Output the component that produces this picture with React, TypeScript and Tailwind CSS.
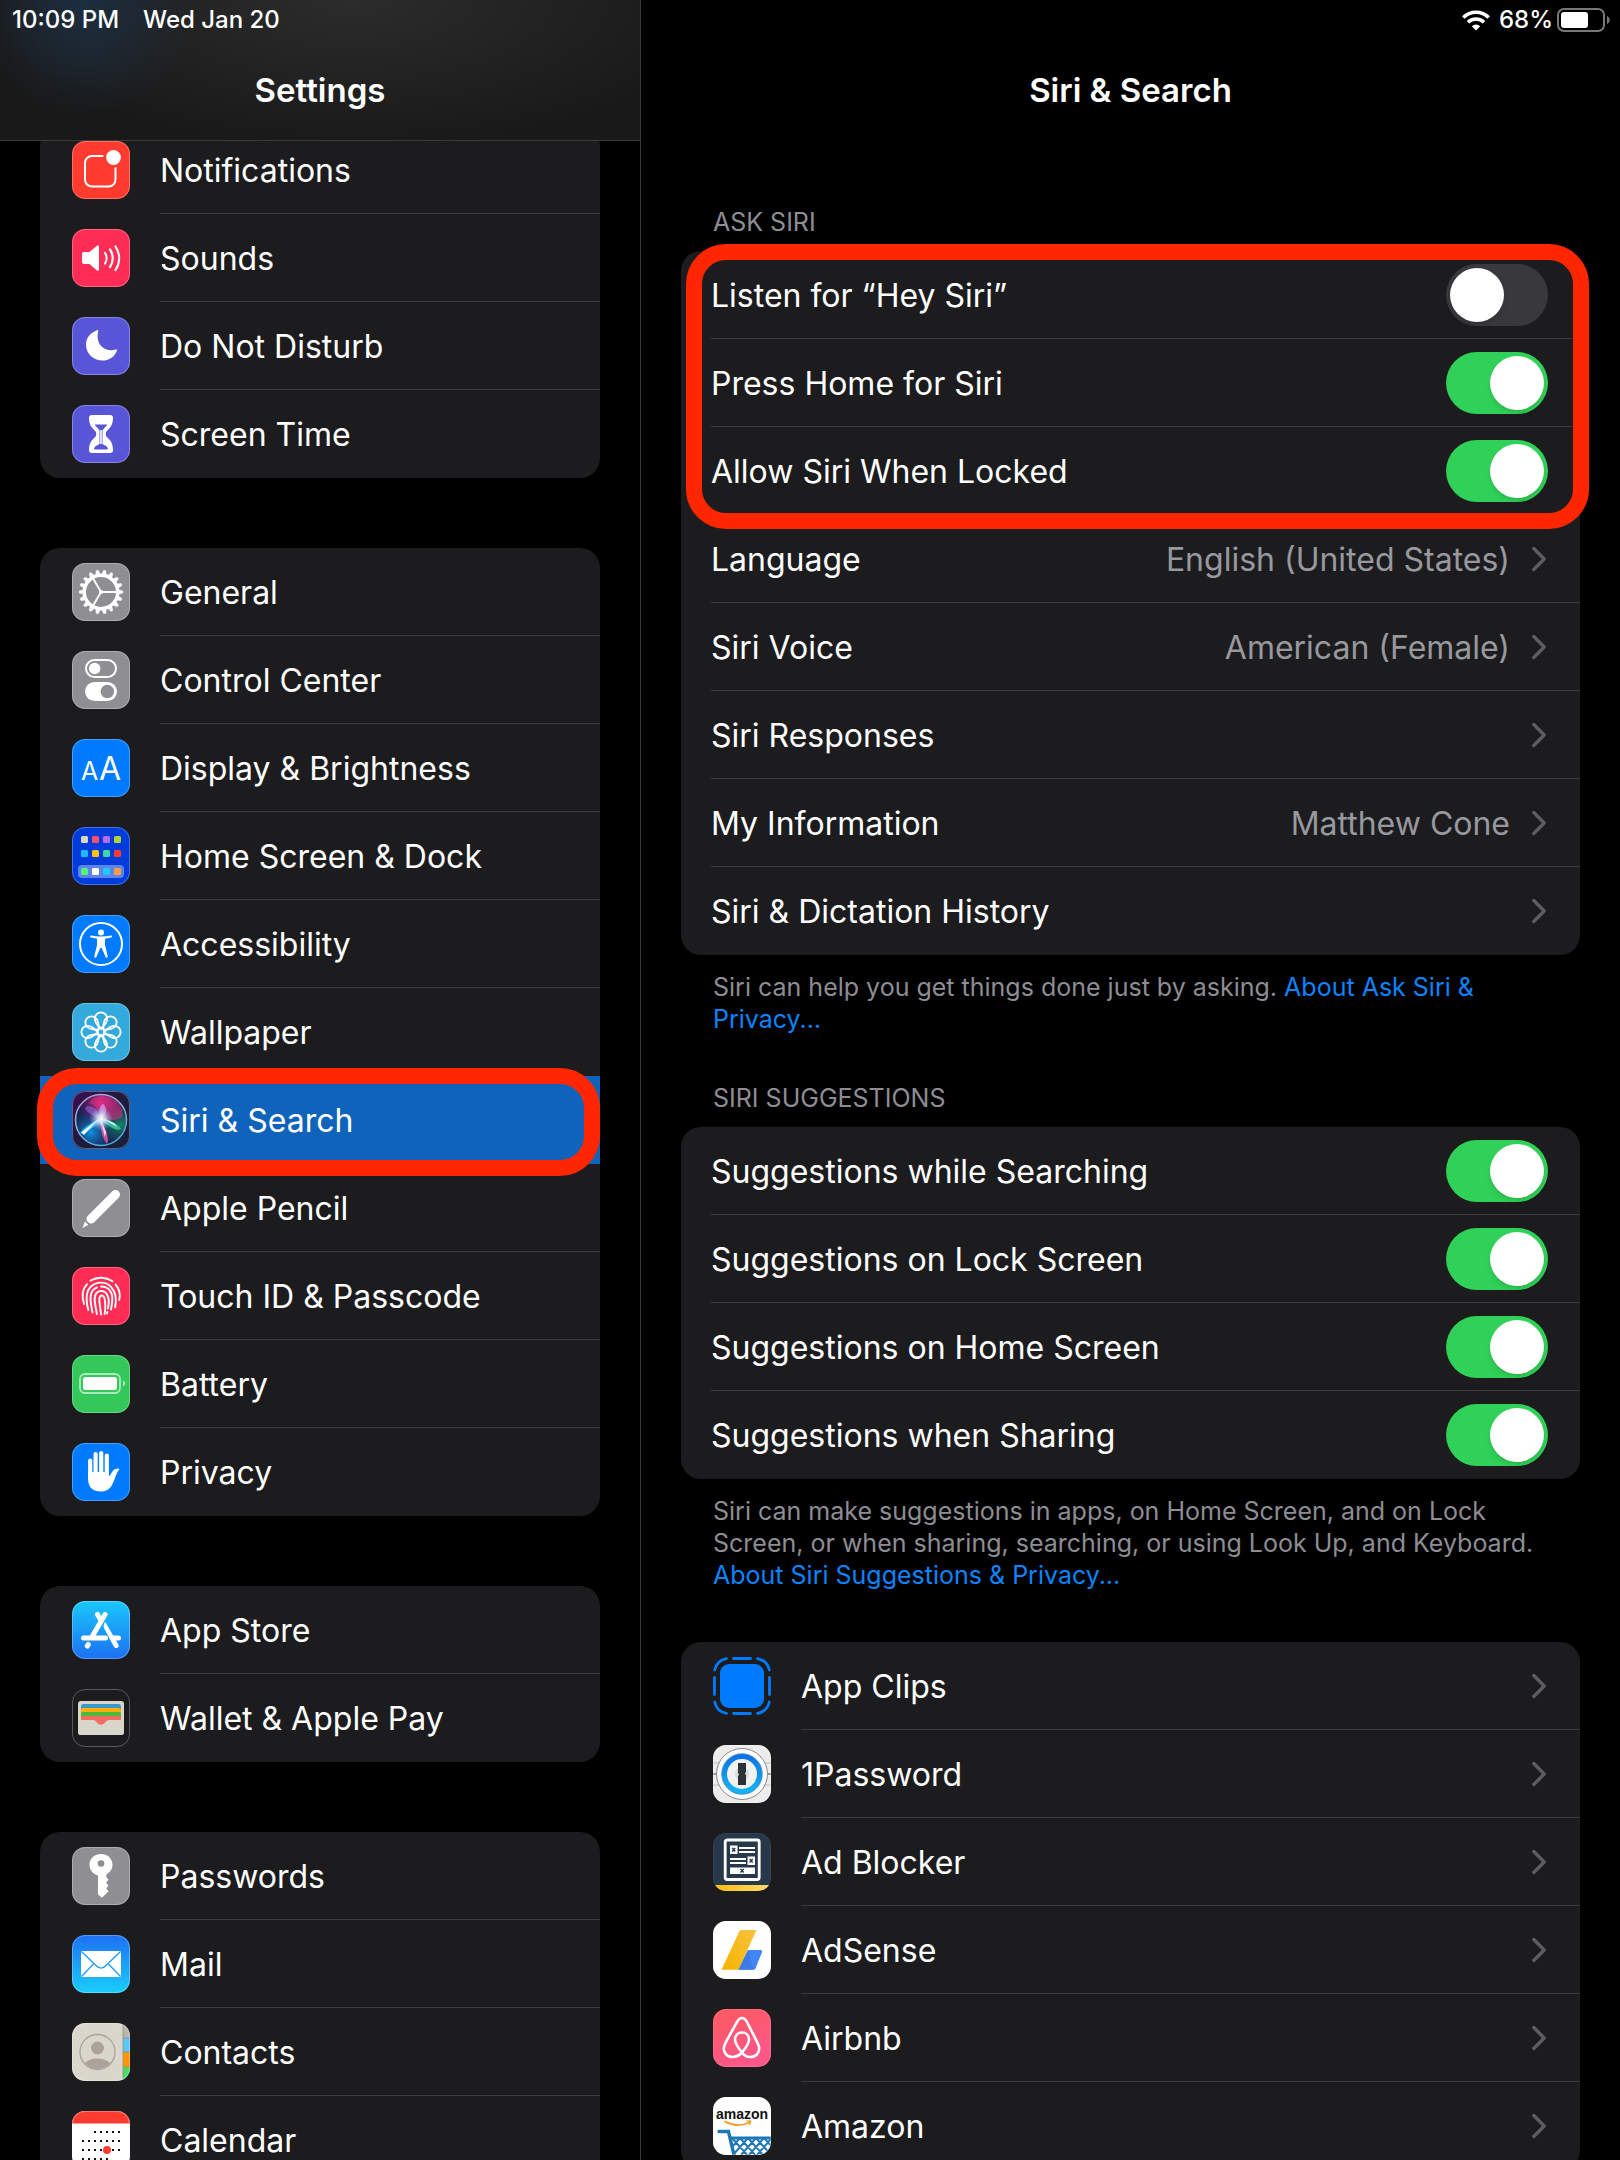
import React, { useState } from 'react';

const GEAR_TEETH = Array.from({ length: 18 }, (_, i) => i * 20);
const PETALS = Array.from({ length: 8 }, (_, i) => i * 45);

// Rounded app tile, every glyph is drawn on a 58 x 58 grid
const Tile = ({ id, fill, edge = 'rgba(255,255,255,0.28)', children }) => (
  <svg viewBox="0 0 58 58" className="size-[58px] shrink-0" aria-hidden="true">
    <defs>
      <clipPath id={`tile-${id}`}>
        <rect width="58" height="58" rx="13" />
      </clipPath>
    </defs>
    <g clipPath={`url(#tile-${id})`}>
      <rect width="58" height="58" fill={fill} />
      {children}
    </g>
    <rect x="0.5" y="0.5" width="57" height="57" rx="12.5" fill="none" stroke={edge} />
  </svg>
);

const NotificationsIcon = () => (
  <Tile id="notifications" fill="#ff3b30">
    <rect x="13" y="15" width="30.5" height="30.5" rx="7" fill="none" stroke="#fff" strokeWidth="2" />
    <circle cx="41.5" cy="16.5" r="10.3" fill="#ff3b30" />
    <circle cx="41.5" cy="16.5" r="7.4" fill="#fff" />
  </Tile>
);

const SoundsIcon = () => (
  <Tile id="sounds" fill="#ff2d55">
    <path d="M12 23h5.500l7.500-6.200c1-.8 2-.3 2 1v22.600c0 1.300-1 1.800-2 1L17.500 35H12c-1.300 0-2-.8-2-2v-8c0-1.200.7-2 2-2z" fill="#fff" />
    <g fill="none" stroke="#fff" strokeWidth="2.200" strokeLinecap="round">
      <path d="M33 24c2 3 2 7.500 0 10.500" />
      <path d="M38 20.500c3.600 5.200 3.600 12.300 0 17.500" />
      <path d="M43.500 17.500c4.800 7.300 4.800 16.200 0 23.500" />
    </g>
  </Tile>
);

const MoonIcon = () => (
  <Tile id="moon" fill="#5856d6">
    <path d="M25 13.300c.9-.5 1.500.1 1.200 1.100-1.300 5-.5 11 3.200 14.800 3.700 3.800 9.300 4.800 14.200 3.300 1.100-.3 1.700.3 1.200 1.400C42.500 39.800 37 43.500 30.500 43.500 21.300 43.500 14 36.700 14 27.500c0-6.300 4-11.500 11-14.200z" fill="#fff" />
  </Tile>
);

const HourglassIcon = () => (
  <Tile id="hourglass" fill="#5856d6">
    <path d="M20 10h18c2 0 3 1 3 2.800 0 7-2.500 9.700-6.200 13.200-1.400 1.400-1.400 4.600 0 6 3.700 3.500 6.200 6.200 6.200 13.200 0 1.800-1 2.800-3 2.800H20c-2 0-3-1-3-2.800 0-7 2.500-9.700 6.200-13.200 1.400-1.400 1.400-4.600 0-6-3.700-3.500-6.200-6.200-6.200-13.200C17 11 18 10 20 10z" fill="#fff" />
    <path d="M23.500 19.500h11c.6 0 .7.500.3 1-1.600 1.900-3.400 3-4.300 5v13.500c1.500 1.200 3.800 1.700 5 3.500.8 1.300.5 2-.8 2H23.300c-1.300 0-1.600-.7-.8-2 1.200-1.800 3.500-2.300 5-3.500V25.500c-.9-2-2.700-3.100-4.300-5-.4-.5-.3-1 .3-1z" fill="#5856d6" />
    <path d="M29 25v14" stroke="#fff" strokeWidth="1.600" />
  </Tile>
);

const GeneralIcon = () => (
  <Tile id="general" fill="#8e8e93">
    <circle cx="29" cy="29" r="16.700" fill="none" stroke="#fff" strokeWidth="3.400" />
    {GEAR_TEETH.map((angle) => (
      <path key={angle} d="M45.500 26.600l5.300 1.300v2.200l-5.300 1.300z" fill="#fff" stroke="#fff" strokeWidth="0.500" transform={`rotate(${angle} 29 29)`} />
    ))}
    <g stroke="#fff" strokeWidth="2">
      <path d="M29 29h16" />
      <path d="M29 29l-8-13.800" />
      <path d="M29 29l-8 13.800" />
    </g>
    <circle cx="29" cy="29" r="2" fill="#fff" />
  </Tile>
);

const ControlCenterIcon = () => (
  <Tile id="control" fill="#8e8e93">
    <rect x="14" y="9" width="30" height="17" rx="8.500" fill="none" stroke="#fff" strokeWidth="2" />
    <circle cx="22.700" cy="17.500" r="5.700" fill="#fff" />
    <rect x="13" y="31" width="32" height="19" rx="9.500" fill="#fff" />
    <circle cx="35.300" cy="40.500" r="6.700" fill="#8e8e93" />
  </Tile>
);

const DisplayIcon = () => (
  <Tile id="display" fill="#007aff">
    <g fill="#fff" className="font-[Inter,sans-serif] font-normal">
      <text x="9" y="41" fontSize="25">A</text>
      <text x="27" y="41" fontSize="32">A</text>
    </g>
  </Tile>
);

const HOME_DOTS = [
  ['#d9d6cc', '#ff4f6a', '#b46cf7', '#b3d335'],
  ['#1cb8f7', '#ffc107', '#3dd6a5', '#ff3b30'],
  ['#55f07a', '#ffffff', '#1acbfd', '#ff9d45'],
];

const HomeScreenIcon = () => (
  <Tile id="home" fill="#003cdc">
    <rect x="6" y="38" width="46" height="13" rx="4" fill="#5d84ea" />
    {HOME_DOTS.map((row, r) =>
      row.map((color, c) => (
        <rect key={color} x={9 + c * 11} y={[9, 23, 41][r]} width="7" height="7" rx="1.500" fill={color} />
      ))
    )}
  </Tile>
);

const AccessibilityIcon = () => (
  <Tile id="access" fill="#007aff">
    <circle cx="29" cy="29" r="21" fill="none" stroke="#fff" strokeWidth="2" />
    <circle cx="29" cy="17.500" r="3" fill="#fff" />
    <path d="M19 20.500c6.500 1.300 13.500 1.300 20 0 1.300-.2 1.500 1.500.3 1.900l-6.300 1.300v6.300l2.700 11.300c.3 1.500-1.600 2-2.100.6L29.700 33h-1.400l-3.900 8.900c-.5 1.400-2.400.9-2.100-.6L25 30v-6.300l-6.300-1.300c-1.200-.4-1-2.100.3-1.900z" fill="#fff" />
  </Tile>
);

const WallpaperIcon = () => (
  <Tile id="wallpaper" fill="#34aadc">
    <g fill="none" stroke="#fff" strokeWidth="1.800">
      {PETALS.map((angle) => (
        <path key={angle} d="M29 25.500C24.500 21.500 22.700 18 22.900 15.500A6.100 6.100 0 0 1 35.100 15.500C35.300 18 33.500 21.500 29 25.500" transform={`rotate(${angle} 29 29)`} />
      ))}
      <circle cx="29" cy="29" r="3.300" />
    </g>
  </Tile>
);

const SiriIcon = () => (
  <Tile id="siri" fill="url(#siri-bg)" edge="rgba(255,255,255,0.3)">
    <defs>
      <linearGradient id="siri-bg" x1="0" y1="0" x2="1" y2="1">
        <stop offset="0" stopColor="#3b0f52" />
        <stop offset="0.500" stopColor="#201a3d" />
        <stop offset="1" stopColor="#16213b" />
      </linearGradient>
      <linearGradient id="siri-ring" x1="0" y1="0" x2="0.600" y2="1">
        <stop offset="0" stopColor="#b59ad0" />
        <stop offset="0.500" stopColor="#8fb8d8" />
        <stop offset="1" stopColor="#4fa9dc" />
      </linearGradient>
      <radialGradient id="siri-pink" cx="0.500" cy="0.150" r="0.500">
        <stop offset="0" stopColor="#d92c8c" />
        <stop offset="1" stopColor="#7a1f86" stopOpacity="0" />
      </radialGradient>
      <radialGradient id="siri-blue" cx="0.300" cy="0.750" r="0.600">
        <stop offset="0" stopColor="#1290e4" />
        <stop offset="1" stopColor="#102a5c" stopOpacity="0" />
      </radialGradient>
      <radialGradient id="siri-green" cx="0.900" cy="0.600" r="0.400">
        <stop offset="0" stopColor="#17806a" />
        <stop offset="1" stopColor="#17806a" stopOpacity="0" />
      </radialGradient>
      <radialGradient id="siri-core">
        <stop offset="0" stopColor="#fff" />
        <stop offset="0.350" stopColor="#e7f4ff" stopOpacity="0.750" />
        <stop offset="1" stopColor="#6fb6ff" stopOpacity="0" />
      </radialGradient>
    </defs>
    <circle cx="29" cy="29" r="25" fill="#15193f" />
    <circle cx="29" cy="29" r="25" fill="url(#siri-blue)" />
    <circle cx="29" cy="29" r="25" fill="url(#siri-green)" />
    <circle cx="29" cy="29" r="25" fill="url(#siri-pink)" />
    <path d="M29 28C35 30 44 30 51 26C52 14 42 5 29 5C22 6 19 9 17 12C24 13 27 20 29 28Z" fill="#e8327f" opacity="0.500" />
    <path d="M29 28C22 26 14 21 13 17C17 13 26 16 29 28Z" fill="#9b6bd8" opacity="0.550" />
    <path d="M29 28C26 20 28 14 31 13C35 16 36 23 29 28Z" fill="#d7a7ee" opacity="0.700" />
    <path d="M29 28C20 30 9 38 8 43C17 40 26 35 29 28Z" fill="#29c8f2" opacity="0.750" />
    <path d="M29 26L9 41.500L12 44Z" fill="#e9fbff" />
    <path d="M28 27C37 29 47 33 49 38C44 41 34 34 28 27Z" fill="#35d39a" opacity="0.800" />
    <path d="M28 26L42 32L45 36Z" fill="#e9fff8" />
    <path d="M28 28C32 34 38 46 35 53C30 47 28 36 28 28Z" fill="#f2559f" opacity="0.850" />
    <path d="M28 27L34 41L33 46Z" fill="#ffe3f3" />
    <circle cx="29" cy="28" r="12" fill="url(#siri-core)" />
    <circle cx="29" cy="29" r="25.500" fill="none" stroke="url(#siri-ring)" strokeWidth="1.500" />
  </Tile>
);

const PencilIcon = () => (
  <Tile id="pencil" fill="#8e8e93">
    <path d="M19 40L43.500 15.500" stroke="#fff" strokeWidth="9" strokeLinecap="round" />
    <path d="M13 42.300l3.400 3.400-6.100 3.200z" fill="#fff" />
    <path d="M12.500 40.500L18.500 46.500" stroke="#8e8e93" strokeWidth="1.200" />
  </Tile>
);

const TouchIdIcon = () => (
  <Tile id="touch" fill="#ff2d55">
    <g fill="none" stroke="#fff" strokeWidth="1.900" strokeLinecap="round">
      <path d="M18.500 13.500a21 21 0 0 1 22 .8" />
      <path d="M12 37C9.500 29 11 21.500 15 17.200" />
      <path d="M43.500 17.500c3.800 4.200 5 10 3.800 15.500" />
      <path d="M16.300 43C14 34 13 25 19 19.500c6-5.500 15-5 20 .3 5.500 6 5.500 14 4.200 20.500" />
      <path d="M20.500 45.500C19 37 16.500 28 21.500 22.700c1-1 2.200-1.700 3.500-2.200" />
      <path d="M29 19.500c7.500 0 11.500 5.500 11.300 12.500 0 3.500-.5 7-1.300 10.500" />
      <path d="M24.800 47C23.700 38 20.500 30.500 24.500 26c3-3.300 8-2.500 10.300 1 3 4.800 2 11 1.200 14.500" />
      <path d="M29 47.500C28.500 39 26 32.500 28 29.500c1.300-1.800 3.700-1 4.300 1 1.300 5 1.200 11.500.3 16.500" />
      <path d="M35.300 45l-.3 1.500" />
    </g>
  </Tile>
);

const BatteryTileIcon = () => (
  <Tile id="battery" fill="#34c759">
    <rect x="8" y="19" width="40" height="19" rx="5" fill="none" stroke="#fff" strokeOpacity="0.600" strokeWidth="1.800" />
    <rect x="11" y="22" width="34" height="13" rx="2.500" fill="#fff" />
    <path d="M51 25.500c2.800 1.200 2.800 5 0 6z" fill="#fff" fillOpacity="0.600" />
  </Tile>
);

const HandIcon = () => (
  <Tile id="privacy" fill="#007aff">
    <g stroke="#fff" strokeWidth="4.200" strokeLinecap="round">
      <path d="M18.200 17.500V34" />
      <path d="M23.600 11V34" />
      <path d="M29.200 10V34" />
      <path d="M34.800 12.500V34" />
    </g>
    <path d="M16.100 29h20.800v4.500c2-1.500 3-6 6.300-7.500 1.700-.8 3.600-.8 4.300 0-3.200 3.800-4.200 9-6.300 13.500C38.500 46 34.500 48.500 28.800 48.500 21 48.500 16.100 44.500 16.100 36z" fill="#fff" />
  </Tile>
);

const AppStoreIcon = () => (
  <Tile id="appstore" fill="url(#appstore-bg)">
    <defs>
      <linearGradient id="appstore-bg" x1="0" y1="0" x2="0" y2="1">
        <stop offset="0" stopColor="#1ac8fc" />
        <stop offset="1" stopColor="#1d70f2" />
      </linearGradient>
    </defs>
    <g stroke="#fff" strokeWidth="5" strokeLinecap="round" fill="none">
      <path d="M33 13.500L20.500 35" />
      <path d="M25.500 13.500l3 5" />
      <path d="M16.300 43.500l-1 1.500" />
      <path d="M11.500 37h22" />
      <path d="M40 37h6.500" />
    </g>
    <path d="M33.300 21c-2.500 3-1.800 5.500-.3 8l8.800 16.500c2 3.200 6 1.200 4.600-2z" fill="#fff" />
  </Tile>
);

const WalletIcon = () => (
  <Tile id="wallet" fill="#1c1c1e" edge="#5a5a5d">
    <rect x="6" y="12" width="46" height="34" rx="3" fill="#d9d6cc" />
    <rect x="9" y="15" width="40" height="10" rx="2.500" fill="#3b99c9" />
    <rect x="9" y="19" width="40" height="10" rx="2" fill="#ffad0a" />
    <rect x="9" y="23" width="40" height="8" rx="1.500" fill="#4cbb3c" />
    <rect x="9" y="27" width="40" height="12" rx="1.500" fill="#f26d5f" />
    <path d="M6 31h14.500c2.500 0 3.500 1.300 4.500 2.600 2.200 2.800 5.800 2.800 8 0 1-1.300 2-2.600 4.500-2.600H52v12a3 3 0 0 1-3 3H9a3 3 0 0 1-3-3z" fill="#d9d6cc" />
  </Tile>
);

const KeyIcon = () => (
  <Tile id="key" fill="#8e8e93">
    <path d="M29 7c6.500 0 11.500 4.700 11.500 10.800 0 4.400-2.600 8-6.200 9.700v2.800l2.200 2.300-2.500 3.200 2.500 2.800-2.200 3 2.200 2.700-5.500 5.500c-.8.800-1.400.8-2.200 0L26 47.200V28.500c-5-1.200-8.500-5.500-8.500-10.700C17.500 11.700 22.500 7 29 7z" fill="#fff" />
    <circle cx="29" cy="16.500" r="3.300" fill="#8e8e93" />
  </Tile>
);

const MailIcon = () => (
  <Tile id="mail" fill="url(#mail-bg)">
    <defs>
      <linearGradient id="mail-bg" x1="0" y1="0" x2="0" y2="1">
        <stop offset="0" stopColor="#1d70f2" />
        <stop offset="1" stopColor="#1acefd" />
      </linearGradient>
    </defs>
    <rect x="9" y="16" width="40" height="26" rx="1" fill="#fff" />
    <g stroke="#1f9bf7" strokeWidth="1.300" fill="none">
      <path d="M9.500 16.500L24 30.500c3.300 3.500 6.700 3.500 10 0L48.500 16.500" />
      <path d="M9.500 41.500L21.500 29" />
      <path d="M48.500 41.500L36.500 29" />
    </g>
  </Tile>
);

const ContactsIcon = () => (
  <Tile id="contacts" fill="#d9d6cc">
    <rect x="51" y="0" width="7" height="15" fill="#b9b5ac" />
    <rect x="51" y="15" width="7" height="14" fill="#5ac8fa" />
    <rect x="51" y="29" width="7" height="15" fill="#ff9500" />
    <rect x="51" y="44" width="7" height="14" fill="#4cd964" />
    <path d="M51 0v58M51 15h7M51 29h7M51 44h7" stroke="#8f8a80" strokeWidth="0.700" />
    <clipPath id="contact-head">
      <circle cx="25.500" cy="29" r="17" />
    </clipPath>
    <circle cx="25.500" cy="29" r="17.500" fill="none" stroke="#aaa29b" strokeWidth="1.300" />
    <circle cx="25.500" cy="25" r="6.500" fill="#aaa29b" />
    <ellipse cx="25.500" cy="44" rx="14" ry="8.500" fill="#aaa29b" clipPath="url(#contact-head)" />
  </Tile>
);

const CalendarIcon = () => (
  <Tile id="calendar" fill="#ffffff">
    <rect width="58" height="12.500" fill="#ff3b30" />
    <g stroke="#111" strokeWidth="2" strokeDasharray="2 4">
      <path d="M22 21h26" />
      <path d="M10 30h38" />
      <path d="M10 39h38" />
      <path d="M10 48h26" />
    </g>
    <circle cx="35" cy="39" r="5" fill="#fff" />
    <circle cx="35" cy="39" r="4" fill="#ff3b30" />
  </Tile>
);

const AppClipsIcon = () => (
  <svg viewBox="0 0 58 58" className="size-[58px] shrink-0" aria-hidden="true">
    <rect x="7" y="7" width="44" height="44" rx="9" fill="#007aff" />
    <g fill="none" stroke="#007aff" strokeWidth="2.800" strokeLinecap="round">
      <path d="M20.500 1.500h17M20.500 56.500h17M1.500 20.500v17M56.500 20.500v17" />
      <path d="M1.700 13C3 7 7.500 2.800 13.500 1.700M44.500 1.700C50.500 2.800 55 7 56.300 13M56.300 45C55 51 50.500 55.200 44.500 56.300M13.500 56.300C7.500 55.200 3 51 1.700 45" />
    </g>
  </svg>
);

const OnePasswordIcon = () => (
  <Tile id="onepassword" fill="#ececec">
    <defs>
      <linearGradient id="op-ring" x1="0" y1="0" x2="0" y2="1">
        <stop offset="0" stopColor="#0a73e8" />
        <stop offset="1" stopColor="#12b4f5" />
      </linearGradient>
    </defs>
    <path d="M0 18h58M0 40h58" stroke="#bdbdbd" />
    <path d="M0 29h58" stroke="#777" strokeWidth="1.500" />
    <circle cx="29" cy="29" r="25.500" fill="#fbfbfb" stroke="#8a8a8a" />
    <circle cx="29" cy="29" r="17.500" fill="#f2f2f2" stroke="url(#op-ring)" strokeWidth="5" />
    <circle cx="29" cy="29" r="20.300" fill="none" stroke="#1c6fa8" strokeWidth="0.700" />
    <circle cx="29" cy="29" r="7" fill="#dcdcdc" />
    <path d="M25 18h8v9l-1.200 1.500L33 30v10h-8v-9l1.200-1.500L25 28z" fill="#2b3238" />
  </Tile>
);

const AdBlockerIcon = () => (
  <Tile id="adblocker" fill="#27384b" edge="rgba(255,255,255,0.06)">
    <defs>
      <linearGradient id="ad-base">
        <stop offset="0" stopColor="#fdbc0d" />
        <stop offset="1" stopColor="#fbdc6a" />
      </linearGradient>
    </defs>
    <rect y="52" width="58" height="6" fill="url(#ad-base)" />
    <rect x="12.200" y="7" width="34" height="39.500" rx="2" fill="none" stroke="#fff" strokeWidth="2.800" />
    <g fill="#fff">
      <rect x="17" y="12.500" width="7.500" height="8.500" />
      <rect x="26" y="14" width="16" height="2" />
      <rect x="26" y="18" width="16" height="2" />
      <rect x="17" y="25" width="16" height="2" />
      <rect x="17" y="29" width="16" height="2" />
      <rect x="34.500" y="23.500" width="7.500" height="8.500" />
      <rect x="17" y="34.500" width="25" height="6.500" />
    </g>
    <path d="M19.200 15l3 3.500m0-3.500l-3 3.500M36.700 26l3 3.500m0-3.500l-3 3.500M27.500 36l3.200 3.500m0-3.500l-3.200 3.500" stroke="#27384b" strokeWidth="1.400" />
  </Tile>
);

const AdSenseIcon = () => (
  <Tile id="adsense" fill="#ffffff">
    <defs>
      <linearGradient id="adsense-bar" x1="1" y1="0" x2="0" y2="1">
        <stop offset="0" stopColor="#f9c23c" />
        <stop offset="1" stopColor="#f4b400" />
      </linearGradient>
    </defs>
    <path d="M35 29h12.500c1.500 0 2 1 1.500 2.300l-6.500 16c-.4 1-1 1.400-2 1.400H25z" fill="#4285f4" />
    <path d="M35 29l5.500 19.700H25z" fill="#3b76e0" opacity="0.700" />
    <path d="M29.500 9H43.500L26.500 46.500c-.7 1.500-1.500 2.200-3 2.200H8.500L26 11c.7-1.400 1.800-2 3.500-2z" fill="url(#adsense-bar)" />
  </Tile>
);

const AirbnbIcon = () => (
  <Tile id="airbnb" fill="url(#airbnb-bg)" edge="rgba(255,255,255,0.12)">
    <defs>
      <linearGradient id="airbnb-bg" x1="0" y1="0" x2="0.400" y2="1">
        <stop offset="0" stopColor="#ff5a5f" />
        <stop offset="1" stopColor="#fc5789" />
      </linearGradient>
    </defs>
    <path d="M29 43.500C24 37.500 22 33.500 22 30.500c0-4.300 3-7 7-7s7 2.700 7 7c0 3-2 7-7 13-3 3.200-6 4.500-9.500 4.500-5.500 0-9.500-4.500-8.500-10 .3-1.500 1-3 2-5.200L24 13c1.400-2.700 2.700-4 5-4s3.600 1.300 5 4l10 19.800c1 2.200 1.700 3.700 2 5.200 1 5.500-3 10-8.500 10-3.500 0-6.500-1.300-8.500-4.500z" fill="none" stroke="#fff" strokeWidth="2.600" strokeLinejoin="round" />
  </Tile>
);

const AmazonIcon = () => (
  <Tile id="amazon" fill="#ffffff">
    <text x="29" y="22" textAnchor="middle" fontSize="14" className="font-['Liberation_Sans',sans-serif] font-bold" fill="#111">amazon</text>
    <path d="M12 24.500c8 4.500 17 4.500 25 .8" fill="none" stroke="#f79a1f" strokeWidth="1.800" strokeLinecap="round" />
    <path d="M33.500 23.800l4.200.2-1.200 4" fill="none" stroke="#f79a1f" strokeWidth="1.300" />
    <path d="M6 34.500h9.500L21 58" fill="none" stroke="#1f78b4" strokeWidth="3.400" strokeLinecap="round" />
    <path d="M17 41h41" stroke="#1f78b4" strokeWidth="3" />
    <path d="M19 41l17 19M27 41l17 19M35 41l17 19M43 41l17 19M51 41l9 10M27 41l-7 8M35 41L20 58M43 41L28 58M51 41L36 58M58 42L44 58M58 51l-6 7" stroke="#1f78b4" strokeWidth="2" />
  </Tile>
);

const sidebarGroups = [
  [
    { label: 'Notifications', Icon: NotificationsIcon },
    { label: 'Sounds', Icon: SoundsIcon },
    { label: 'Do Not Disturb', Icon: MoonIcon },
    { label: 'Screen Time', Icon: HourglassIcon },
  ],
  [
    { label: 'General', Icon: GeneralIcon },
    { label: 'Control Center', Icon: ControlCenterIcon },
    { label: 'Display & Brightness', Icon: DisplayIcon },
    { label: 'Home Screen & Dock', Icon: HomeScreenIcon },
    { label: 'Accessibility', Icon: AccessibilityIcon },
    { label: 'Wallpaper', Icon: WallpaperIcon },
    { label: 'Siri & Search', Icon: SiriIcon },
    { label: 'Apple Pencil', Icon: PencilIcon },
    { label: 'Touch ID & Passcode', Icon: TouchIdIcon },
    { label: 'Battery', Icon: BatteryTileIcon },
    { label: 'Privacy', Icon: HandIcon },
  ],
  [
    { label: 'App Store', Icon: AppStoreIcon },
    { label: 'Wallet & Apple Pay', Icon: WalletIcon },
  ],
  [
    { label: 'Passwords', Icon: KeyIcon },
    { label: 'Mail', Icon: MailIcon },
    { label: 'Contacts', Icon: ContactsIcon },
    { label: 'Calendar', Icon: CalendarIcon },
  ],
];

const askSiriToggles = [
  { label: 'Listen for “Hey Siri”', on: false },
  { label: 'Press Home for Siri', on: true },
  { label: 'Allow Siri When Locked', on: true },
];

const askSiriLinks = [
  { label: 'Language', value: 'English (United States)' },
  { label: 'Siri Voice', value: 'American (Female)' },
  { label: 'Siri Responses', value: '' },
  { label: 'My Information', value: 'Matthew Cone' },
  { label: 'Siri & Dictation History', value: '' },
];

const suggestionToggles = [
  { label: 'Suggestions while Searching', on: true },
  { label: 'Suggestions on Lock Screen', on: true },
  { label: 'Suggestions on Home Screen', on: true },
  { label: 'Suggestions when Sharing', on: true },
];

const apps = [
  { label: 'App Clips', Icon: AppClipsIcon },
  { label: '1Password', Icon: OnePasswordIcon },
  { label: 'Ad Blocker', Icon: AdBlockerIcon },
  { label: 'AdSense', Icon: AdSenseIcon },
  { label: 'Airbnb', Icon: AirbnbIcon },
  { label: 'Amazon', Icon: AmazonIcon },
];

const Chevron = () => (
  <svg viewBox="0 0 16 26" className="w-4 h-[26px] shrink-0" aria-hidden="true">
    <path d="M1.800 2.500L12.200 13L1.800 23.500" fill="none" stroke="#5c5c61" strokeWidth="3.400" strokeLinecap="round" strokeLinejoin="round" />
  </svg>
);

const ToggleRow = ({ label, on, last = false }) => {
  const [checked, setChecked] = useState(on);

  return (
    <label className="flex h-[88px] pl-[30px] cursor-pointer">
      <span className={`flex flex-1 items-center justify-between pr-8 border-b ${last ? 'border-transparent' : 'border-[#3b3b3e]'}`}>
        <span className="pt-0.5">{label}</span>
        <input
          type="checkbox"
          checked={checked}
          onChange={() => setChecked(!checked)}
          className="appearance-none w-[102px] h-[62px] p-1 rounded-full bg-[#39393d] checked:bg-[#30d158] cursor-pointer before:block before:size-[54px] before:rounded-full before:bg-white before:shadow-md checked:before:translate-x-10"
        />
      </span>
    </label>
  );
};

const LinkRow = ({ label, value = '', Icon = null, last = false }) => (
  <a href="#" className={`flex h-[88px] items-center ${Icon ? 'gap-[30px] pl-8' : 'pl-[30px]'}`}>
    {Icon && <Icon />}
    <span className={`flex flex-1 h-full items-center border-b pr-8 ${last ? 'border-transparent' : 'border-[#3b3b3e]'}`}>
      <span className="flex-1 pt-0.5">{label}</span>
      {value && <span className="pt-0.5 mr-[22px] text-[#98989f]">{value}</span>}
      <Chevron />
    </span>
  </a>
);

const SidebarRow = ({ label, Icon, selected, divider }) => (
  <a
    href="#"
    className={`relative flex h-[88px] items-center gap-[30px] pl-8 ${selected ? 'bg-[#0f63bb]' : ''}`}
  >
    <Icon />
    <span className={`flex flex-1 h-full items-center pt-0.5 border-b ${divider ? 'border-[#3b3b3e]' : 'border-transparent'}`}>
      {label}
    </span>
    {selected && (
      <span className="absolute z-10 -top-2 -bottom-3 -left-[3px] right-0 rounded-[40px] border-[16px] border-[#ff2600] pointer-events-none" />
    )}
  </a>
);

const StatusIcons = () => (
  <div className="flex items-center justify-end h-10 pr-[9px] text-2xl font-medium">
    <svg viewBox="0 0 28 21" className="w-7 h-[21px] mr-[9px]" aria-hidden="true">
      <g fill="none" stroke="#fff" strokeWidth="3.600">
        <path d="M1.300 7.500a18 18 0 0 1 25.400 0" />
        <path d="M6 12.300a11.500 11.500 0 0 1 16 0" />
      </g>
      <path d="M14 20.500l-4.200-4.200a6 6 0 0 1 8.400 0z" fill="#fff" />
    </svg>
    <span>68%</span>
    <svg viewBox="0 0 54 24" className="w-[54px] h-6 ml-1" aria-hidden="true">
      <rect x="1" y="1" width="46" height="22" rx="6" fill="none" stroke="#77777a" strokeWidth="2" />
      <rect x="4" y="4" width="27" height="16" rx="3" fill="#fff" />
      <path d="M50 8c3.600 1.500 3.600 6.500 0 8z" fill="#77777a" />
    </svg>
  </div>
);

const Sidebar = () => (
  <aside className="w-[641px] shrink-0 h-screen overflow-hidden border-r border-[#3b3b3e]">
    <header className="relative z-10 h-[141px] border-b border-[#3a3a3a] bg-[#191919] bg-[radial-gradient(circle_at_85px_5px,#1c2e40_0,transparent_110px),radial-gradient(ellipse_at_55%_0,#2c2c2c_0,#191919_75%)]">
      <div className="flex items-center h-10 pl-3 gap-6 text-2xl font-medium">
        <span>10:09 PM</span>
        <span>Wed Jan 20</span>
      </div>
      <h1 className="flex items-center justify-center h-[100px] pt-0.5 text-[33px] font-semibold">Settings</h1>
    </header>
    <nav className="flex flex-col gap-[70px] px-10 -mt-[15px]">
      {sidebarGroups.map((group, g) => (
        <div key={g} className="rounded-[20px] bg-[#1c1c1e]">
          {group.map((item, i) => {
            const selected = item.label === 'Siri & Search';
            const nextSelected = group[i + 1]?.label === 'Siri & Search';
            return (
              <SidebarRow
                key={item.label}
                label={item.label}
                Icon={item.Icon}
                selected={selected}
                divider={!selected && !nextSelected && i < group.length - 1}
              />
            );
          })}
        </div>
      ))}
    </nav>
  </aside>
);

const App = () => (
  <div className="flex h-screen overflow-hidden bg-black text-white font-[Inter,sans-serif] text-[32px]">
    <Sidebar />

    <main className="flex-1 h-screen overflow-hidden">
      <header>
        <StatusIcons />
        <h1 className="flex items-center justify-center h-[100px] pt-0.5 text-[33px] font-semibold">Siri &amp; Search</h1>
      </header>

      <div className="px-10 pt-[66px]">
        {/* Ask Siri */}
        <h2 className="pl-8 mb-[13px] text-[25px] leading-8 text-[#8d8d93]">ASK SIRI</h2>
        <section className="rounded-[20px] bg-[#1c1c1e]">
          <div className="relative">
            {askSiriToggles.map((row) => (
              <ToggleRow key={row.label} label={row.label} on={row.on} />
            ))}
            <div className="absolute -top-[7px] -bottom-[14px] left-[5px] -right-[9px] rounded-[40px] border-[16px] border-[#ff2600] pointer-events-none" />
          </div>
          {askSiriLinks.map((row, i) => (
            <LinkRow key={row.label} label={row.label} value={row.value} last={i === askSiriLinks.length - 1} />
          ))}
        </section>
        <p className="px-8 mt-4 text-[25px] leading-8 text-[#8d8d93]">
          Siri can help you get things done just by asking.{' '}
          <a href="#" className="text-[#0a84ff]">About Ask Siri &amp; Privacy...</a>
        </p>

        {/* Siri Suggestions */}
        <h2 className="pl-8 mt-[47px] mb-[13px] text-[25px] leading-8 text-[#8d8d93]">SIRI SUGGESTIONS</h2>
        <section className="rounded-[20px] bg-[#1c1c1e]">
          {suggestionToggles.map((row, i) => (
            <ToggleRow key={row.label} label={row.label} on={row.on} last={i === suggestionToggles.length - 1} />
          ))}
        </section>
        <p className="px-8 mt-4 text-[25px] leading-8 text-[#8d8d93]">
          Siri can make suggestions in apps, on Home Screen, and on Lock Screen, or when sharing, searching, or using Look Up, and Keyboard.{' '}
          <a href="#" className="text-[#0a84ff] block">About Siri Suggestions &amp; Privacy...</a>
        </p>

        {/* Apps */}
        <section className="mt-[51px] rounded-[20px] bg-[#1c1c1e]">
          {apps.map((app) => (
            <LinkRow key={app.label} label={app.label} Icon={app.Icon} />
          ))}
        </section>
      </div>
    </main>
  </div>
);

export default App;
